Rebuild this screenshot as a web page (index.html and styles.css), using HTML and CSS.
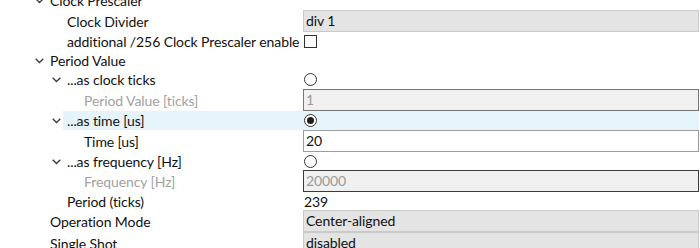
FILE: index.html
```html
<!DOCTYPE html>
<html lang="en">
<head>
    <meta charset="UTF-8">
    <title>Timer Properties</title>
    <link rel="stylesheet" href="styles.css">
</head>
<body>

    <div class="tree">
        <!-- Clock Prescaler -->
        <div class="row text-row">
            <div class="label lvl0"><span class="chev"><svg width="9" height="6" viewBox="0 0 9 6"><path d="M0.7 0.7 L4.5 4.5 L8.3 0.7" /></svg></span><span class="name">Clock Prescaler</span></div>
            <div class="value"></div>
        </div>
        <div class="row input-row">
            <div class="label lvl1"><span class="name">Clock Divider</span></div>
            <div class="value"><div class="field combo">div 1</div></div>
        </div>
        <div class="row text-row">
            <div class="label lvl1"><span class="name">additional /256 Clock Prescaler enable</span></div>
            <div class="value"><span class="checkbox"></span></div>
        </div>

        <!-- Period Value -->
        <div class="row text-row">
            <div class="label lvl0"><span class="chev"><svg width="9" height="6" viewBox="0 0 9 6"><path d="M0.7 0.7 L4.5 4.5 L8.3 0.7" /></svg></span><span class="name">Period Value</span></div>
            <div class="value"></div>
        </div>
        <div class="row text-row">
            <div class="label lvl1 has-chev"><span class="chev"><svg width="9" height="6" viewBox="0 0 9 6"><path d="M0.7 0.7 L4.5 4.5 L8.3 0.7" /></svg></span><span class="name">...as clock ticks</span></div>
            <div class="value"><span class="radio"></span></div>
        </div>
        <div class="row input-row">
            <div class="label lvl2"><span class="name muted">Period Value [ticks]</span></div>
            <div class="value"><div class="field disabled">1</div></div>
        </div>
        <div class="row text-row selected">
            <div class="label lvl1 has-chev"><span class="chev"><svg width="9" height="6" viewBox="0 0 9 6"><path d="M0.7 0.7 L4.5 4.5 L8.3 0.7" /></svg></span><span class="name">...as time [us]</span></div>
            <div class="value"><span class="radio checked"></span></div>
        </div>
        <div class="row input-row">
            <div class="label lvl2"><span class="name">Time [us]</span></div>
            <div class="value"><div class="field edit">20</div></div>
        </div>
        <div class="row text-row short">
            <div class="label lvl1 has-chev"><span class="chev"><svg width="9" height="6" viewBox="0 0 9 6"><path d="M0.7 0.7 L4.5 4.5 L8.3 0.7" /></svg></span><span class="name">...as frequency [Hz]</span></div>
            <div class="value"><span class="radio"></span></div>
        </div>
        <div class="row input-row">
            <div class="label lvl2"><span class="name muted">Frequency [Hz]</span></div>
            <div class="value"><div class="field disabled dark">20000</div></div>
        </div>
        <div class="row text-row short">
            <div class="label lvl1"><span class="name">Period (ticks)</span></div>
            <div class="value"><span class="plain">239</span></div>
        </div>

        <!-- Mode -->
        <div class="row input-row">
            <div class="label lvl0"><span class="name">Operation Mode</span></div>
            <div class="value"><div class="field combo">Center-aligned</div></div>
        </div>
        <div class="row input-row">
            <div class="label lvl0"><span class="name">Single Shot</span></div>
            <div class="value"><div class="field combo">disabled</div></div>
        </div>
    </div>

</body>
</html>
```

FILE: styles.css
```css
body {
    margin: 0;
    background-color: #fff;
    font-family: Lato, "Noto Sans", sans-serif;
    font-size: 14px;
    letter-spacing: -0.1px;
    color: #111;
    overflow: hidden;
}

.tree {
    margin-top: -9px;
    width: 699px;
}

.row {
    display: grid;
    grid-template-columns: 303px 396px;
}

.text-row {
    height: 19px;
}

.text-row.short {
    height: 18px;
}

.input-row {
    height: 22px;
}

.label {
    display: flex;
    align-items: center;
    white-space: nowrap;
}

/* indentation per tree level */
.lvl0 {
    padding-left: 35px;
}

.lvl1 {
    padding-left: 67px;
}

.lvl1.has-chev {
    padding-left: 52px;
}

.lvl2 {
    padding-left: 84px;
}

.lvl0 .name:first-child {
    margin-left: 15px;
}

.chev {
    width: 15px;
    display: flex;
    align-items: center;
}

.chev svg {
    display: block;
    margin-top: 1px;
}

.chev path {
    fill: none;
    stroke: #3a3a3a;
    stroke-width: 1.3;
}

.muted {
    color: #a2a2a2;
}

.value {
    display: flex;
    align-items: center;
    min-width: 0;
}

.selected .name {
    background-color: #e5f3fb;
    align-self: stretch;
    display: flex;
    align-items: center;
    margin-left: -4px;
    padding-left: 4px;
    flex: 1;
}

.selected .value {
    background-color: #e5f3fb;
}

.field {
    box-sizing: border-box;
    width: 100%;
    height: 22px;
    padding-left: 2px;
    line-height: 20px;
    border: 1px solid #c9c9c9;
    white-space: nowrap;
}

.combo {
    background-color: #e4e4e4;
}

.disabled {
    background-color: #f0f0f0;
    border-color: #767676;
    color: #9a9a9a;
}

.disabled.dark {
    border-color: #3c3c3c;
}

.edit {
    background-color: #fff;
    border-color: #9c9c9c;
}

.plain {
    padding-left: 1px;
}

.checkbox {
    box-sizing: border-box;
    width: 13px;
    height: 13px;
    margin-left: 1px;
    border: 1px solid #333;
    background-color: #fff;
}

.radio {
    box-sizing: border-box;
    width: 13px;
    height: 13px;
    margin-left: 1px;
    border: 1px solid #333;
    border-radius: 50%;
    background-color: #fff;
    position: relative;
}

.radio.checked::after {
    content: "";
    position: absolute;
    left: 2px;
    top: 2px;
    width: 7px;
    height: 7px;
    border-radius: 50%;
    background-color: #1e1e1e;
}
```
